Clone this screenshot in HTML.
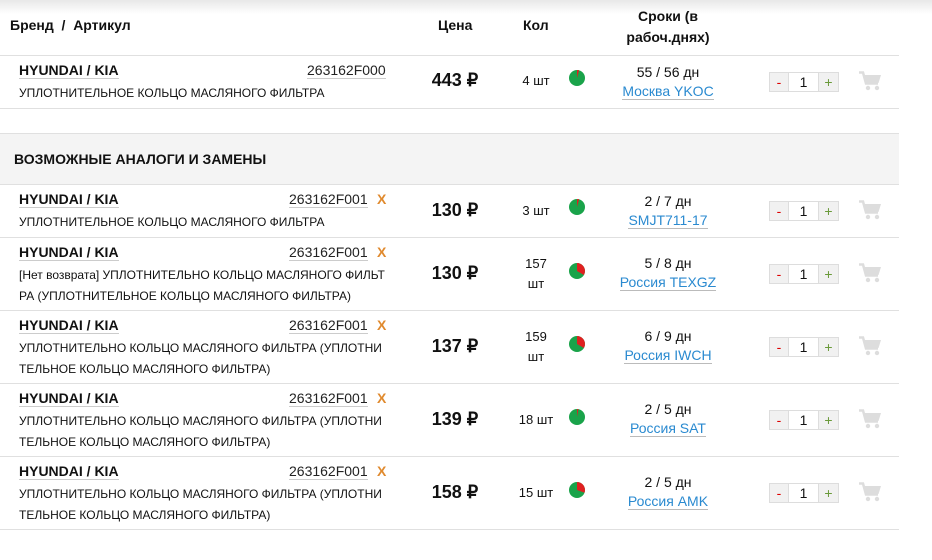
<!DOCTYPE html>
<html><head><meta charset="utf-8"><style>
*{margin:0;padding:0;box-sizing:border-box}
body{width:932px;height:560px;background:#fff;font-family:"Liberation Sans",Arial,sans-serif;color:#111;position:relative;overflow:hidden}
.top{position:absolute;left:0;top:0;width:932px;height:14px;background:linear-gradient(#e8e8e8,#fff)}
.a{position:absolute;white-space:nowrap}
.h{font-weight:bold;font-size:14px}
.line{position:absolute;left:0;width:899px;height:1px;background:#e0e0e0}
.row{position:absolute;left:0;width:899px}
.br{left:19px;font-weight:bold;font-size:14px;border-bottom:1px solid #ccc;line-height:16px}
.art{font-size:14px;border-bottom:1px solid #ccc;line-height:16px;color:#222}
.x{color:#e08a2e;font-weight:bold;font-size:14px;line-height:16px}
.d{left:19px;font-size:12px;line-height:21px;color:#111}
.p{font-weight:bold;font-size:18px;width:80px;left:415px;text-align:center;line-height:20px}
.k{font-size:13px;width:60px;left:506px;text-align:center;line-height:20px}
.s{font-size:14px;width:160px;left:588px;text-align:center;line-height:19px}
.s a{color:#2a8ad0;text-decoration:none;border-bottom:1px solid #bbb}
.q{left:769px;width:70px;height:20px;border:1px solid #ddd;display:flex;font-size:14px}
.q span{display:block;text-align:center;line-height:18px}
.q .m{width:19px;background:#f1f1f1;color:#d00;border-right:1px solid #ddd}
.q .v{width:29px;background:#fff}
.q .pl{width:20px;background:#f1f1f1;color:#6a9a3a;border-left:1px solid #ddd}
.pie{left:569px;width:16px;height:16px}
.cart{left:859px;width:22px;height:20px}
</style></head><body>
<div class="top"></div>
<div class="a h" style="left:10px;top:17px">Бренд &nbsp;/&nbsp; Артикул</div>
<div class="a h" style="left:438px;top:17px">Цена</div>
<div class="a h" style="left:523px;top:17px">Кол</div>
<div class="a h" style="left:608px;top:6px;width:120px;text-align:center;line-height:21px;white-space:normal">Сроки (в рабоч.днях)</div>
<div class="line" style="top:55px"></div>

<!-- row1 -->
<div class="row" style="top:55px">
<div class="a br" style="top:7px">HYUNDAI / KIA</div>
<div class="a art" style="left:307px;top:7px">263162F000</div>
<div class="a d" style="top:28px">УПЛОТНИТЕЛЬНОЕ КОЛЬЦО МАСЛЯНОГО ФИЛЬТРА</div>
<div class="a p" style="top:15px">443 ₽</div>
<div class="a k" style="top:16px">4 шт</div>
<svg class="a pie" style="top:15px" viewBox="0 0 16 16"><circle cx="8" cy="8" r="8" fill="#1aa34a"/><path d="M8 8V0A8 8 0 0 1 10.1 .3Z" fill="#e02020"/></svg>
<div class="a s" style="top:8px">55 / 56 дн<br><a>Москва YKOC</a></div>
<div class="a q" style="top:17px"><span class="m">-</span><span class="v">1</span><span class="pl">+</span></div>
<svg class="a cart" style="top:16px" viewBox="0 0 22 20"><path d="M0 1.5h4l3 11h12" fill="none" stroke="#ddd" stroke-width="2.5"/><path d="M5 4h17l-2.5 8H7.5z" fill="#ddd"/><circle cx="9" cy="17" r="2.2" fill="#ddd"/><circle cx="18" cy="17" r="2.2" fill="#ddd"/></svg>
</div>
<div class="line" style="top:108px"></div>

<div class="a" style="left:0;top:133px;width:899px;height:51px;background:#f4f4f4;border-top:1px solid #e0e0e0"></div>
<div class="a h" style="left:14px;top:151px">ВОЗМОЖНЫЕ АНАЛОГИ И ЗАМЕНЫ</div>
<div class="line" style="top:184px"></div>

<!-- row2 -->
<div class="row" style="top:184px">
<div class="a br" style="top:7px">HYUNDAI / KIA</div>
<div class="a art" style="left:289px;top:7px">263162F001</div><div class="a x" style="left:377px;top:7px">X</div>
<div class="a d" style="top:28px">УПЛОТНИТЕЛЬНОЕ КОЛЬЦО МАСЛЯНОГО ФИЛЬТРА</div>
<div class="a p" style="top:16px">130 ₽</div>
<div class="a k" style="top:17px">3 шт</div>
<svg class="a pie" style="top:15px" viewBox="0 0 16 16"><circle cx="8" cy="8" r="8" fill="#1aa34a"/><path d="M8 8V0A8 8 0 0 1 10.1 .3Z" fill="#e02020"/></svg>
<div class="a s" style="top:8px">2 / 7 дн<br><a>SMJT711-17</a></div>
<div class="a q" style="top:17px"><span class="m">-</span><span class="v">1</span><span class="pl">+</span></div>
<svg class="a cart" style="top:16px" viewBox="0 0 22 20"><path d="M0 1.5h4l3 11h12" fill="none" stroke="#ddd" stroke-width="2.5"/><path d="M5 4h17l-2.5 8H7.5z" fill="#ddd"/><circle cx="9" cy="17" r="2.2" fill="#ddd"/><circle cx="18" cy="17" r="2.2" fill="#ddd"/></svg>
</div>
<div class="line" style="top:237px"></div>

<!-- row3 -->
<div class="row" style="top:237px">
<div class="a br" style="top:7px">HYUNDAI / KIA</div>
<div class="a art" style="left:289px;top:7px">263162F001</div><div class="a x" style="left:377px;top:7px">X</div>
<div class="a d" style="top:28px">[Нет возврата] УПЛОТНИТЕЛЬНО КОЛЬЦО МАСЛЯНОГО ФИЛЬТ<br>РА (УПЛОТНИТЕЛЬНОЕ КОЛЬЦО МАСЛЯНОГО ФИЛЬТРА)</div>
<div class="a p" style="top:26px">130 ₽</div>
<div class="a k" style="top:17px">157<br>шт</div>
<svg class="a pie" style="top:26px" viewBox="0 0 16 16"><circle cx="8" cy="8" r="8" fill="#1aa34a"/><path d="M8 8V0A8 8 0 0 1 14.9 12Z" fill="#e02020"/></svg>
<div class="a s" style="top:17px">5 / 8 дн<br><a>Россия TEXGZ</a></div>
<div class="a q" style="top:27px"><span class="m">-</span><span class="v">1</span><span class="pl">+</span></div>
<svg class="a cart" style="top:26px" viewBox="0 0 22 20"><path d="M0 1.5h4l3 11h12" fill="none" stroke="#ddd" stroke-width="2.5"/><path d="M5 4h17l-2.5 8H7.5z" fill="#ddd"/><circle cx="9" cy="17" r="2.2" fill="#ddd"/><circle cx="18" cy="17" r="2.2" fill="#ddd"/></svg>
</div>
<div class="line" style="top:310px"></div>

<!-- row4 -->
<div class="row" style="top:310px">
<div class="a br" style="top:7px">HYUNDAI / KIA</div>
<div class="a art" style="left:289px;top:7px">263162F001</div><div class="a x" style="left:377px;top:7px">X</div>
<div class="a d" style="top:28px">УПЛОТНИТЕЛЬНО КОЛЬЦО МАСЛЯНОГО ФИЛЬТРА (УПЛОТНИ<br>ТЕЛЬНОЕ КОЛЬЦО МАСЛЯНОГО ФИЛЬТРА)</div>
<div class="a p" style="top:26px">137 ₽</div>
<div class="a k" style="top:17px">159<br>шт</div>
<svg class="a pie" style="top:26px" viewBox="0 0 16 16"><circle cx="8" cy="8" r="8" fill="#1aa34a"/><path d="M8 8V0A8 8 0 0 1 14.9 12Z" fill="#e02020"/></svg>
<div class="a s" style="top:17px">6 / 9 дн<br><a>Россия IWCH</a></div>
<div class="a q" style="top:27px"><span class="m">-</span><span class="v">1</span><span class="pl">+</span></div>
<svg class="a cart" style="top:26px" viewBox="0 0 22 20"><path d="M0 1.5h4l3 11h12" fill="none" stroke="#ddd" stroke-width="2.5"/><path d="M5 4h17l-2.5 8H7.5z" fill="#ddd"/><circle cx="9" cy="17" r="2.2" fill="#ddd"/><circle cx="18" cy="17" r="2.2" fill="#ddd"/></svg>
</div>
<div class="line" style="top:383px"></div>

<!-- row5 -->
<div class="row" style="top:383px">
<div class="a br" style="top:7px">HYUNDAI / KIA</div>
<div class="a art" style="left:289px;top:7px">263162F001</div><div class="a x" style="left:377px;top:7px">X</div>
<div class="a d" style="top:28px">УПЛОТНИТЕЛЬНО КОЛЬЦО МАСЛЯНОГО ФИЛЬТРА (УПЛОТНИ<br>ТЕЛЬНОЕ КОЛЬЦО МАСЛЯНОГО ФИЛЬТРА)</div>
<div class="a p" style="top:26px">139 ₽</div>
<div class="a k" style="top:27px">18 шт</div>
<svg class="a pie" style="top:26px" viewBox="0 0 16 16"><circle cx="8" cy="8" r="8" fill="#1aa34a"/><path d="M8 8V0A8 8 0 0 1 9.4 .1Z" fill="#e02020"/></svg>
<div class="a s" style="top:17px">2 / 5 дн<br><a>Россия SAT</a></div>
<div class="a q" style="top:27px"><span class="m">-</span><span class="v">1</span><span class="pl">+</span></div>
<svg class="a cart" style="top:26px" viewBox="0 0 22 20"><path d="M0 1.5h4l3 11h12" fill="none" stroke="#ddd" stroke-width="2.5"/><path d="M5 4h17l-2.5 8H7.5z" fill="#ddd"/><circle cx="9" cy="17" r="2.2" fill="#ddd"/><circle cx="18" cy="17" r="2.2" fill="#ddd"/></svg>
</div>
<div class="line" style="top:456px"></div>

<!-- row6 -->
<div class="row" style="top:456px">
<div class="a br" style="top:7px">HYUNDAI / KIA</div>
<div class="a art" style="left:289px;top:7px">263162F001</div><div class="a x" style="left:377px;top:7px">X</div>
<div class="a d" style="top:28px">УПЛОТНИТЕЛЬНО КОЛЬЦО МАСЛЯНОГО ФИЛЬТРА (УПЛОТНИ<br>ТЕЛЬНОЕ КОЛЬЦО МАСЛЯНОГО ФИЛЬТРА)</div>
<div class="a p" style="top:26px">158 ₽</div>
<div class="a k" style="top:27px">15 шт</div>
<svg class="a pie" style="top:26px" viewBox="0 0 16 16"><circle cx="8" cy="8" r="8" fill="#1aa34a"/><path d="M8 8V0A8 8 0 0 1 15.5 10.7Z" fill="#e02020"/></svg>
<div class="a s" style="top:17px">2 / 5 дн<br><a>Россия AMK</a></div>
<div class="a q" style="top:27px"><span class="m">-</span><span class="v">1</span><span class="pl">+</span></div>
<svg class="a cart" style="top:26px" viewBox="0 0 22 20"><path d="M0 1.5h4l3 11h12" fill="none" stroke="#ddd" stroke-width="2.5"/><path d="M5 4h17l-2.5 8H7.5z" fill="#ddd"/><circle cx="9" cy="17" r="2.2" fill="#ddd"/><circle cx="18" cy="17" r="2.2" fill="#ddd"/></svg>
</div>
<div class="line" style="top:529px"></div>
</body></html>
